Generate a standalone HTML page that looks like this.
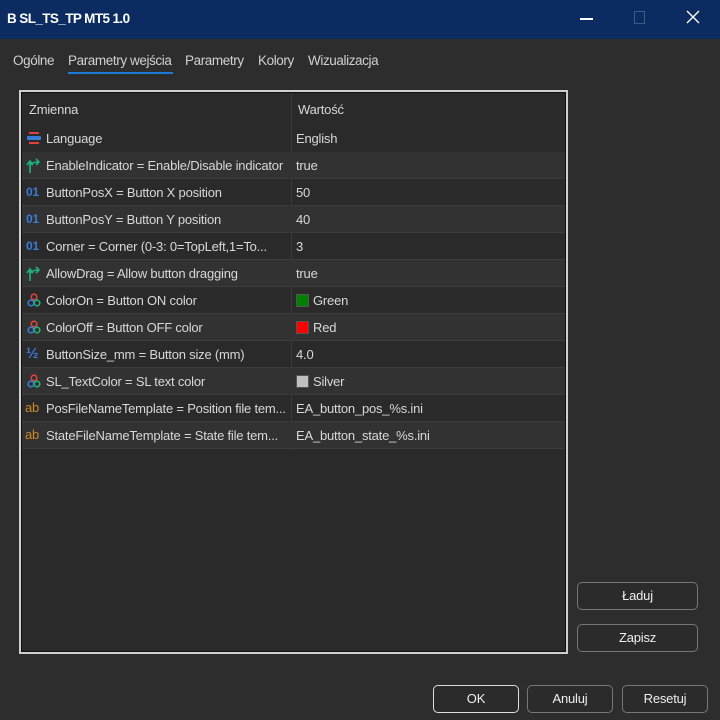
<!DOCTYPE html>
<html><head><meta charset="utf-8"><style>
*{margin:0;padding:0;box-sizing:border-box}
body{width:720px;height:720px;background:#2d2d2d;font-family:"Liberation Sans",sans-serif;color:#d8d8d8;font-size:13px;letter-spacing:-0.2px;position:relative;overflow:hidden}
.title{position:absolute;left:0;top:0;width:720px;height:39px;background:#0b2b61;color:#fff;font-size:13.5px;font-weight:bold;letter-spacing:-0.6px}
.title span{position:absolute;left:7px;top:11px}
.tabs{position:absolute;top:53px;left:13px;font-size:13.5px;color:#d0d0d0;letter-spacing:-0.4px}
.tabs span{position:absolute;white-space:nowrap}
.ul{position:absolute;left:68px;top:72px;width:105px;height:2px;background:#1e7ad8}
.box{position:absolute;left:19px;top:90px;width:549px;height:564px;border:2px solid #cfcfcf;background:#2a2a2a}
.box:before{content:"";position:absolute;inset:0;border:1px solid #111}
.row{position:absolute;left:1px;width:543px;height:27px;border-bottom:1px solid #3c3c3c}
.row.a{background:#323232}
.row .n{position:absolute;left:24px;top:6px;white-space:nowrap}
.row .v{position:absolute;left:274px;top:6px;white-space:nowrap}
.vl{position:absolute;left:270px;top:1px;width:1px;height:357px;background:#3c3c3c}
.ic{position:absolute;left:4px;top:5px;width:16px;height:16px}
.sw{display:inline-block;width:13px;height:13px;vertical-align:-2px;margin-right:4px;border:1px solid #555}
.btn{position:absolute;height:28px;border:1.5px solid #777;border-radius:5px;background:#2b2b2b;color:#eee;text-align:center;line-height:25px;font-size:13px}
.num{color:#3a7bd5;font-weight:bold;font-size:12px;left:4px;top:6px;position:absolute}
.ab{color:#c8892a;font-size:13px;left:3px;top:5px;position:absolute}
</style></head><body>
<div class="title"><span>B SL_TS_TP MT5 1.0</span>
<div style="position:absolute;left:580px;top:18px;width:13px;height:1.5px;background:#fff"></div>
<div style="position:absolute;left:634px;top:11px;width:11px;height:13px;border:1px solid #3c5a8a"></div>
<svg style="position:absolute;left:686px;top:10px" width="14" height="14"><path d="M1 1L13 13M13 1L1 13" stroke="#fff" stroke-width="1.4"/></svg>
</div>
<div class="tabs">
<span style="left:0;top:0">Ogólne</span><span style="left:55px;top:0">Parametry wejścia</span><span style="left:172px;top:0">Parametry</span><span style="left:245px;top:0">Kolory</span><span style="left:295px;top:0">Wizualizacja</span>
</div>
<div class="ul"></div>
<div class="box">
<div class="vl"></div>
<div style="position:absolute;left:8px;top:10px">Zmienna</div>
<div style="position:absolute;left:277px;top:10px">Wartość</div>
<div class="row" style="top:33px;border:none;height:27px"><svg class="ic" viewBox="0 0 16 16"><rect x="3" y="2" width="10" height="2" fill="#d9443e"/><rect x="1" y="6" width="14" height="4" rx="1" fill="#3a7bd5"/><rect x="3" y="12" width="10" height="2" fill="#d9443e"/></svg><span class="n">Language</span><span class="v">English</span></div>
<div class="row a" style="top:60px"><svg class="ic" viewBox="0 0 16 16"><path d="M4 16V5M1 8l3-4 3 4M4 10c0-4 4-5 9-5M10 2l3 3-3 3" stroke="#1db37a" stroke-width="1.6" fill="none"/></svg><span class="n">EnableIndicator = Enable/Disable indicator</span><span class="v">true</span></div>
<div class="row" style="top:87px"><span class="num">01</span><span class="n">ButtonPosX = Button X position</span><span class="v">50</span></div>
<div class="row a" style="top:114px"><span class="num">01</span><span class="n">ButtonPosY = Button Y position</span><span class="v">40</span></div>
<div class="row" style="top:141px"><span class="num">01</span><span class="n">Corner = Corner (0-3: 0=TopLeft,1=To...</span><span class="v">3</span></div>
<div class="row a" style="top:168px"><svg class="ic" viewBox="0 0 16 16"><path d="M4 16V5M1 8l3-4 3 4M4 10c0-4 4-5 9-5M10 2l3 3-3 3" stroke="#1db37a" stroke-width="1.6" fill="none"/></svg><span class="n">AllowDrag = Allow button dragging</span><span class="v">true</span></div>
<div class="row" style="top:195px"><svg class="ic" viewBox="0 0 16 16"><circle cx="8" cy="5" r="2.8" stroke="#d9443e" stroke-width="1.6" fill="none"/><circle cx="5" cy="11" r="2.8" stroke="#3a7bd5" stroke-width="1.6" fill="none"/><circle cx="11" cy="11" r="2.8" stroke="#1db37a" stroke-width="1.6" fill="none"/></svg><span class="n">ColorOn = Button ON color</span><span class="v"><i class="sw" style="background:#008000"></i>Green</span></div>
<div class="row a" style="top:222px"><svg class="ic" viewBox="0 0 16 16"><circle cx="8" cy="5" r="2.8" stroke="#d9443e" stroke-width="1.6" fill="none"/><circle cx="5" cy="11" r="2.8" stroke="#3a7bd5" stroke-width="1.6" fill="none"/><circle cx="11" cy="11" r="2.8" stroke="#1db37a" stroke-width="1.6" fill="none"/></svg><span class="n">ColorOff = Button OFF color</span><span class="v"><i class="sw" style="background:#f00"></i>Red</span></div>
<div class="row" style="top:249px"><span class="num" style="font-size:15px;top:4px">½</span><span class="n">ButtonSize_mm = Button size (mm)</span><span class="v">4.0</span></div>
<div class="row a" style="top:276px"><svg class="ic" viewBox="0 0 16 16"><circle cx="8" cy="5" r="2.8" stroke="#d9443e" stroke-width="1.6" fill="none"/><circle cx="5" cy="11" r="2.8" stroke="#3a7bd5" stroke-width="1.6" fill="none"/><circle cx="11" cy="11" r="2.8" stroke="#1db37a" stroke-width="1.6" fill="none"/></svg><span class="n">SL_TextColor = SL text color</span><span class="v"><i class="sw" style="background:#c0c0c0"></i>Silver</span></div>
<div class="row" style="top:303px"><span class="ab">ab</span><span class="n">PosFileNameTemplate = Position file tem...</span><span class="v">EA_button_pos_%s.ini</span></div>
<div class="row a" style="top:330px"><span class="ab">ab</span><span class="n">StateFileNameTemplate = State file tem...</span><span class="v">EA_button_state_%s.ini</span></div>
</div>
<div class="btn" style="left:577px;top:582px;width:121px">Ładuj</div>
<div class="btn" style="left:577px;top:624px;width:121px">Zapisz</div>
<div class="btn" style="left:433px;top:685px;width:86px;border-color:#ddd">OK</div>
<div class="btn" style="left:527px;top:685px;width:86px">Anuluj</div>
<div class="btn" style="left:622px;top:685px;width:86px">Resetuj</div>
</body></html>
